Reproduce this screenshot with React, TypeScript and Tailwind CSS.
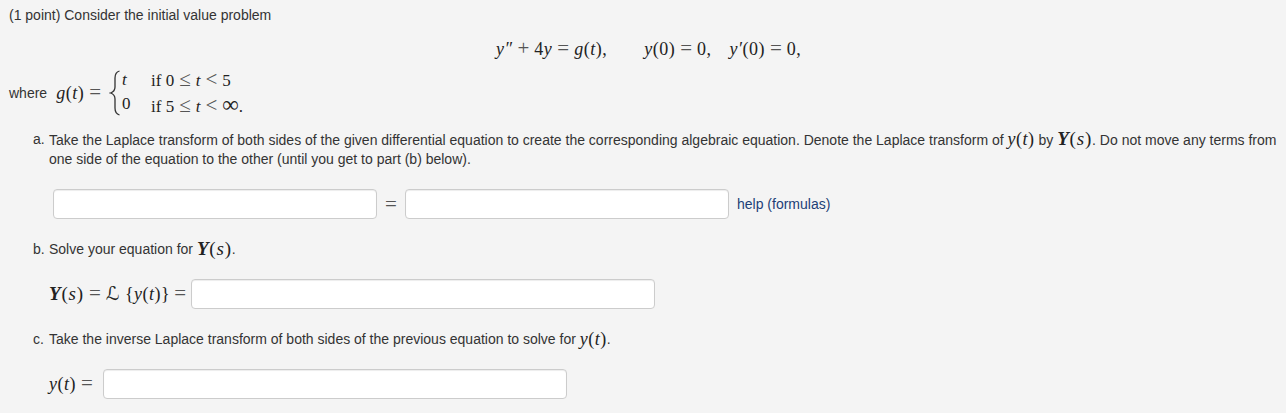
import React from 'react';

const I = ({ children }: { children: React.ReactNode }) => <i className="italic">{children}</i>;

const Math = ({ children, className = '' }: { children: React.ReactNode; className?: string }) => (
  <span className={`font-['Liberation_Serif',serif] text-[18px] tracking-[0.5px] text-[#222] whitespace-pre ${className}`}>{children}</span>
);

// the operators in the reference are wider and lighter than the text face
const Op = ({ children, className = 'mx-[5px]' }: { children: React.ReactNode; className?: string }) => (
  <span className={`text-[21px] leading-none tracking-normal text-[#555] ${className}`}>{children}</span>
);

const AnswerBox = ({ width }: { width: string }) => (
  <input type="text" className={`${width} h-[30px] bg-white border border-[#ccc] rounded-[4px] shadow-[inset_0_1px_1px_rgba(0,0,0,0.075)]`} />
);

const BigY = () => (
  <span className="font-['Liberation_Serif',serif] text-[19px] tracking-[0.8px] text-[#222] whitespace-pre">
    <b className="italic">Y</b>(<I>s</I>)
  </span>
);

const Brace = () => (
  <svg width="12" height="46" viewBox="0 0 12 46" className="shrink-0" fill="none" stroke="#333">
    <path d="M10.5 1 C7 2 6 4 6 8 V17 C6 20 4.5 22 1.5 23 C4.5 24 6 26 6 29 V38 C6 42 7 44 10.5 45" strokeWidth="1.3" />
  </svg>
);

export default function App() {
  return (
    <div className="h-[413px] w-[1286px] overflow-hidden bg-[#f4f4f4] text-[14px] text-[#333] font-['Liberation_Sans',Arial,sans-serif]">
      <div className="pl-[9px] pt-[5px] h-[20px] leading-[20px]">(1 point) Consider the initial value problem</div>

      <div className="mt-[18px] h-[22px] leading-[22px] pl-[496px] flex items-center">
        <Math>
          <I>y″</I>
          <Op>+</Op>4<I>y</I>
          <Op>=</Op>
          <I>g</I>(<I>t</I>),
        </Math>
        <Math className="ml-[37px]">
          <I>y</I>(0)
          <Op>=</Op>0,
        </Math>
        <Math className="ml-[18px]">
          <I>y′</I>(0)
          <Op>=</Op>0,
        </Math>
      </div>

      <div className="mt-[9px] pl-[9px] flex items-center h-[48px]">
        <span>where</span>
        <Math className="ml-[9px]">
          <I>g</I>(<I>t</I>)
          <Op>=</Op>
        </Math>
        <span className="ml-[3px]">
          <Brace />
        </span>
        <div className="ml-[1px] grid grid-cols-[29px_auto] gap-y-[2px] font-['Liberation_Serif',serif] text-[17px] leading-[21px] text-[#222]">
          <I>t</I>
          <span>if 0<Op>≤</Op><I>t</I><Op>&lt;</Op>5</span>
          <span>0</span>
          <span>if 5<Op>≤</Op><I>t</I><Op>&lt;</Op><span className="text-[23px] leading-none">∞</span>.</span>
        </div>
      </div>

      <div className="mt-[12px] pl-[33px] pr-[6px] leading-[20px] flex">
        <span className="w-[16px] shrink-0">a.</span>
        <div className="whitespace-nowrap">
          <div className="h-[20px]">
            Take the Laplace transform of both sides of the given differential equation to create the corresponding algebraic equation. Denote the Laplace transform of <Math><I>y</I>(<I>t</I>)</Math> by <BigY />. Do not move any terms from
          </div>
          <div className="h-[20px]">one side of the equation to the other (until you get to part (b) below).</div>
        </div>
      </div>

      <div className="mt-[20px] pl-[53px] flex items-center">
        <AnswerBox width="w-[324px]" />
        <span className="w-[28px] text-center font-['Liberation_Serif',serif] text-[21px] leading-none text-[#555]">=</span>
        <AnswerBox width="w-[324px]" />
        <a className="ml-[8px] text-[#1c3f77]">help (formulas)</a>
      </div>

      <div className="mt-[20px] pl-[33px] h-[20px] leading-[20px] flex items-center">
        <span className="w-[16px]">b.</span>
        <span className="whitespace-pre">Solve your equation for </span>
        <BigY />
        <span>.</span>
      </div>

      <div className="mt-[20px] pl-[49px] flex items-center">
        <Math>
          <BigY />
          <Op>=</Op>
          <span className="font-['DejaVu_Sans',sans-serif] text-[19px] leading-none">ℒ</span> {'{'}<I>y</I>(<I>t</I>){'}'}
          <Op className="mx-[4px]">=</Op>
        </Math>
        <AnswerBox width="ml-[1px] w-[464px]" />
      </div>

      <div className="mt-[20px] pl-[33px] h-[20px] leading-[20px] flex items-center">
        <span className="w-[16px]">c.</span>
        <span className="whitespace-pre">Take the inverse Laplace transform of both sides of the previous equation to solve for </span>
        <Math><I>y</I>(<I>t</I>)</Math>
        <span>.</span>
      </div>

      <div className="mt-[20px] pl-[49px] flex items-center">
        <Math>
          <I>y</I>(<I>t</I>)
          <Op>=</Op>
        </Math>
        <AnswerBox width="ml-[5px] w-[464px]" />
      </div>
    </div>
  );
}
